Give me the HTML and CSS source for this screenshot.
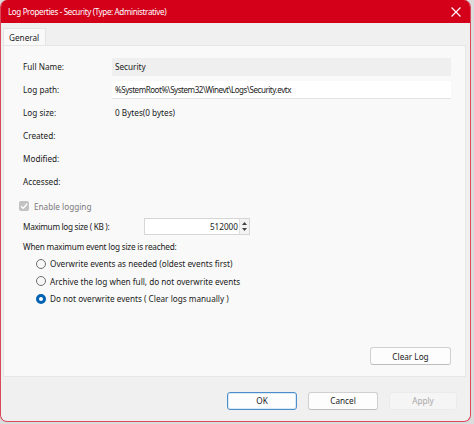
FILE: index.html
```html
<!DOCTYPE html>
<html lang="en">
<head>
    <meta charset="UTF-8">
    <title>Log Properties - Security</title>
    <link rel="stylesheet" href="styles.css">
</head>
<body>
    <div class="window">
        <div class="titlebar">
            <span class="title">Log Properties - Security (Type: Administrative)</span>
            <svg class="close" width="10" height="10" viewBox="0 0 10 10">
                <path d="M0.5 0.5 L9.5 9.5 M9.5 0.5 L0.5 9.5" stroke="#fff" stroke-width="1.1" fill="none"/>
            </svg>
        </div>
        <div class="client">
            <div class="tabs">
                <div class="tab active">General</div>
            </div>
            <div class="panel">
                <div class="info">
                    <div class="row">
                        <span class="label">Full Name:</span>
                        <div class="value field readonly">Security</div>
                    </div>
                    <div class="row">
                        <span class="label">Log path:</span>
                        <div class="value field path">%SystemRoot%\System32\Winevt\Logs\Security.evtx</div>
                    </div>
                    <div class="row">
                        <span class="label">Log size:</span>
                        <div class="value">0 Bytes(0 bytes)</div>
                    </div>
                    <div class="row"><span class="label">Created:</span></div>
                    <div class="row"><span class="label">Modified:</span></div>
                    <div class="row"><span class="label">Accessed:</span></div>
                </div>

                <div class="logging">
                    <label class="check disabled">
                        <span class="box">
                            <svg width="10" height="10" viewBox="0 0 10 10">
                                <path d="M2 5.2 L4.2 7.3 L8.2 2.8" stroke="#fff" stroke-width="1.3" fill="none"/>
                            </svg>
                        </span>
                        Enable logging
                    </label>
                    <div class="size-row">
                        <span class="size-label">Maximum log size ( KB ):</span>
                        <div class="spin">
                            <span class="spin-value">512000</span>
                            <div class="spin-arrows">
                                <svg width="7" height="5" viewBox="0 0 7 5"><path d="M3.5 1 L6 4 L1 4 Z" fill="#444"/></svg>
                                <svg width="7" height="5" viewBox="0 0 7 5"><path d="M1 1 L6 1 L3.5 4 Z" fill="#444"/></svg>
                            </div>
                        </div>
                    </div>
                    <div class="reached">When maximum event log size is reached:</div>
                    <div class="radios">
                        <label class="radio"><span class="dot"></span>Overwrite events as needed (oldest events first)</label>
                        <label class="radio"><span class="dot"></span>Archive the log when full, do not overwrite events</label>
                        <label class="radio checked"><span class="dot"></span>Do not overwrite events ( Clear logs manually )</label>
                    </div>
                </div>

                <div class="clear-row">
                    <button class="btn clear">Clear Log</button>
                </div>
            </div>
            <div class="footer">
                <button class="btn default">OK</button>
                <button class="btn">Cancel</button>
                <button class="btn disabled">Apply</button>
            </div>
        </div>
    </div>
</body>
</html>
```

FILE: styles.css
```css
:root {
    --accent: #d4001a;
    --frame: #f0f0f0;
    --panel: #f9f9f9;
    --text: #1a1a1a;
}

* {
    margin: 0;
    padding: 0;
    box-sizing: border-box;
}

body {
    width: 474px;
    height: 424px;
    background: #dcdcdc;
    font-family: 'Noto Sans', 'Open Sans', Arial, sans-serif;
    font-size: 8.2px;
    color: var(--text);
    overflow: hidden;
}

.window {
    width: 471px;
    height: 422px;
    display: flex;
    flex-direction: column;
    border: 1px solid #d9495a;
    border-top: none;
    border-radius: 7px;
    background: var(--frame);
    overflow: hidden;
}

.titlebar {
    height: 23px;
    flex-shrink: 0;
    background: var(--accent);
    display: flex;
    align-items: center;
    justify-content: space-between;
    padding: 0 9px 0 7px;
    color: #fff;
}

.title {
    font-size: 8px;
    letter-spacing: -0.35px;
}

.client {
    flex: 1;
    display: flex;
    flex-direction: column;
    padding: 0 4px 0 2px;
}

.tabs {
    display: flex;
    padding-top: 5px;
    height: 22px;
    flex-shrink: 0;
}

.tab {
    padding: 3px 6px 0 5px;
}

.tab.active {
    background: var(--panel);
    border: 1px solid #e4e4e4;
    border-bottom: none;
}

.panel {
    height: 332px;
    background: var(--panel);
    border: 1px solid #e6e6e6;
    display: flex;
    flex-direction: column;
    padding: 9px 14px 0 19px;
}

.info {
    display: flex;
    flex-direction: column;
}

.row {
    display: flex;
    align-items: center;
    height: 23px;
}

.label {
    width: 89px;
    flex-shrink: 0;
}

.value {
    flex: 1;
    padding-left: 3px;
}

.field {
    height: 18px;
    display: flex;
    align-items: center;
}

.field.readonly {
    background: #efefef;
}

.field.path {
    background: #fff;
    border-bottom: 1px solid #e2e2e2;
    font-size: 8px;
    letter-spacing: -0.45px;
}

.logging {
    margin-top: 6px;
    display: flex;
    flex-direction: column;
}

.check {
    display: flex;
    align-items: center;
    gap: 5px;
    margin-left: -4px;
    height: 14px;
}

.check.disabled {
    color: #7a7a7a;
}

.box {
    width: 10px;
    height: 10px;
    border-radius: 2px;
    background: #c2c2c2;
    display: flex;
    align-items: center;
    justify-content: center;
}

.size-row {
    display: flex;
    align-items: center;
    margin-top: 5px;
    height: 17px;
}

.size-label {
    width: 121px;
    letter-spacing: -0.3px;
}

.spin {
    width: 106px;
    height: 17px;
    background: #fff;
    border: 1px solid #d6d6d6;
    display: flex;
    align-items: center;
    justify-content: flex-end;
}

.spin-value {
    padding-right: 1px;
}

.spin-arrows {
    width: 10px;
    height: 100%;
    display: flex;
    flex-direction: column;
    align-items: center;
    justify-content: center;
    gap: 1px;
    background: #f3f3f3;
    border-left: 1px solid #e0e0e0;
}

.reached {
    margin-top: 3px;
    height: 17px;
    display: flex;
    align-items: center;
    letter-spacing: -0.2px;
}

.radios {
    display: flex;
    flex-direction: column;
    padding-left: 13px;
}

.radio {
    display: flex;
    align-items: center;
    gap: 4px;
    height: 17.5px;
}

.dot {
    width: 10px;
    height: 10px;
    border-radius: 50%;
    border: 1px solid #6f6f6f;
    background: #f7f7f7;
}

.radio.checked .dot {
    border: 3px solid #0062b3;
    background: #fff;
}

.clear-row {
    margin-top: auto;
    margin-bottom: 11px;
    display: flex;
    justify-content: flex-end;
}

.btn {
    font-family: inherit;
    font-size: 8.2px;
    color: var(--text);
    background: #fdfdfd;
    border: 1px solid #d0d0d0;
    border-bottom-color: #bdbdbd;
    border-radius: 3px;
    height: 18px;
    width: 70px;
}

.btn.clear {
    width: 81px;
}

.btn.default {
    border: 1px solid #4d8dc9;
    box-shadow: inset 0 0 0 1px #d8e8f6;
}

.btn.disabled {
    color: #a8a8a8;
    background: #f5f5f5;
    border-color: #ebebeb;
    width: 68px;
}

.footer {
    flex: 1;
    display: flex;
    justify-content: flex-end;
    align-items: center;
    gap: 11px;
    padding: 3px 9px 0 0;
}
```
